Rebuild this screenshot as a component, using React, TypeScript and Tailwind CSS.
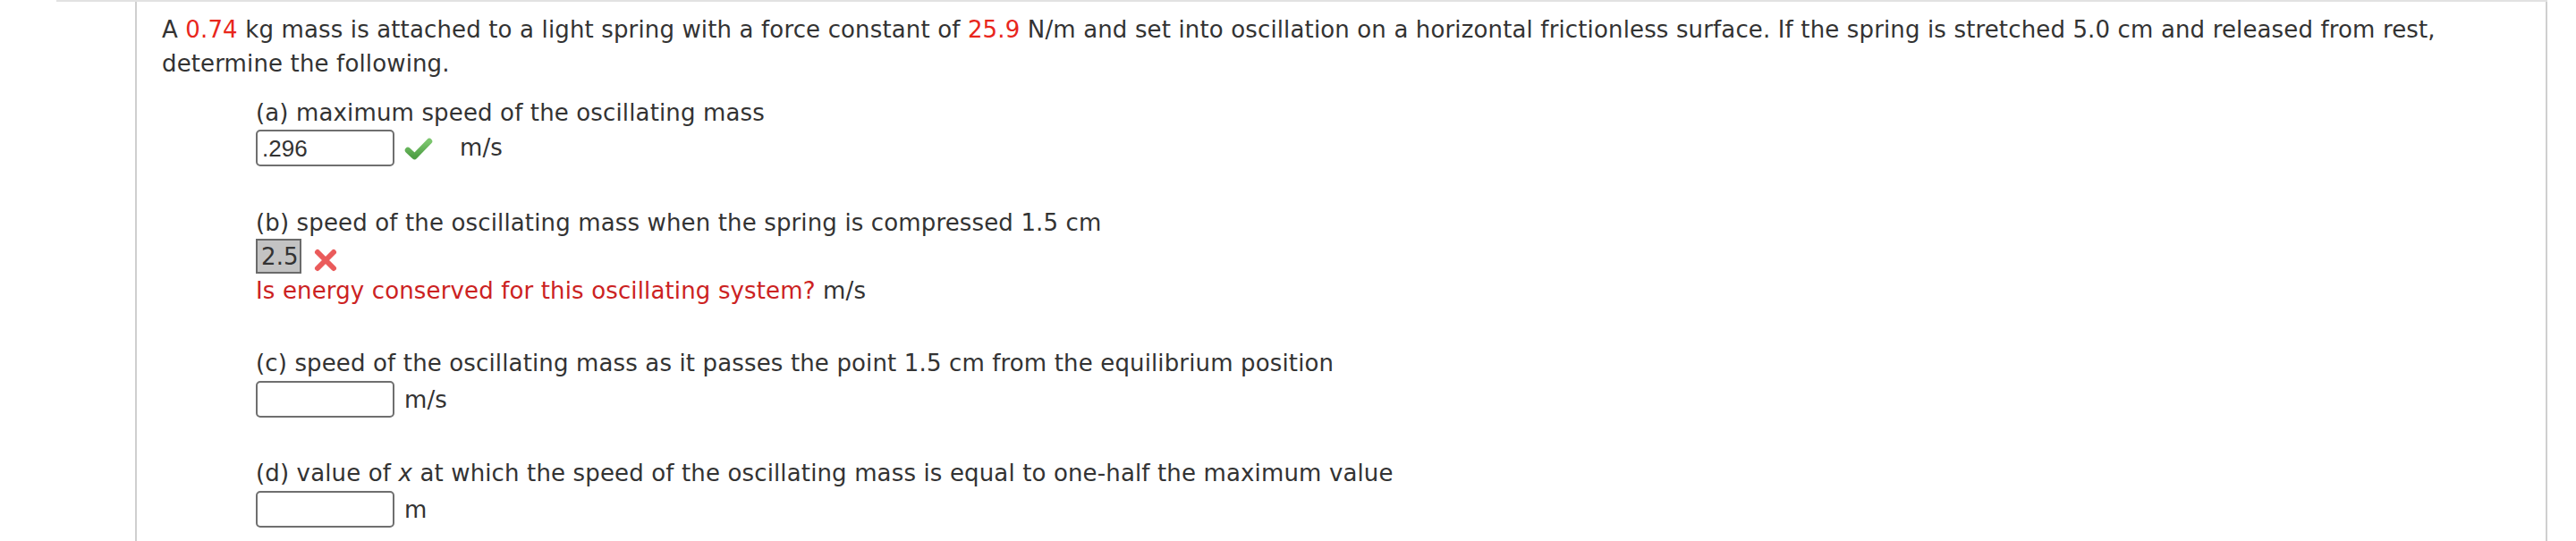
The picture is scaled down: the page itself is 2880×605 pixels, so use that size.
import React from 'react';

function CheckMark() {
  return (
    <svg width="32" height="27" viewBox="0 0 32 27" className="mt-[8px]">
      <defs>
        <linearGradient id="chk" x1="0" y1="0" x2="0" y2="1">
          <stop offset="0" stopColor="#7cc66e" />
          <stop offset="1" stopColor="#4f9f45" />
        </linearGradient>
      </defs>
      <path d="M4 15 L11.5 22 L28 5" fill="none" stroke="url(#chk)" strokeWidth="6.5" strokeLinecap="round" strokeLinejoin="round" />
    </svg>
  );
}

function CrossMark() {
  return (
    <svg width="28" height="28" viewBox="0 0 28 28" className="mt-[10px]">
      <path d="M5 5 L23 23 M23 5 L5 23" fill="none" stroke="#ea5b5b" strokeWidth="6" strokeLinecap="round" />
    </svg>
  );
}

function AnswerBox({ value }: { value?: string }) {
  return (
    <div className="h-[41px] w-[155px] rounded-[5px] border-2 border-[#6f6f6f] bg-white px-[5px] flex items-center text-[26px] tracking-normal text-[#333] font-['Liberation_Sans',Arial,sans-serif]">
      {value}
    </div>
  );
}

export default function App() {
  const red = 'text-[#e8261c]';

  return (
    <div className="w-[2880px] h-[605px] bg-white overflow-hidden font-['DejaVu_Sans',Verdana,sans-serif] text-[26px] leading-[38px] tracking-[0.14px] text-[#333]">
      <div className="ml-[63px] w-[2785px] h-full border-t-2 border-[#e2e2e2] flex">
        <div className="w-[88px] shrink-0" />
        <div className="flex-1 border-l-2 border-r-2 border-[#cfcfcf] pl-[28px] pt-[12px]">
          <p>
            A <span className={red}>0.74</span> kg mass is attached to a light spring with a force constant of{' '}
            <span className={red}>25.9</span> N/m and set into oscillation on a horizontal frictionless surface. If the
            spring is stretched 5.0 cm and released from rest,
            <br />
            determine the following.
          </p>

          <div className="ml-[105px]">
            {/* (a) */}
            <div className="mt-[17px]">
              <p>(a) maximum speed of the oscillating mass</p>
              <div className="flex items-start">
                <AnswerBox value=".296" />
                <div className="ml-[11px]">
                  <CheckMark />
                </div>
                <span className="ml-[30px] mt-[1px]">m/s</span>
              </div>
            </div>

            {/* (b) */}
            <div className="mt-[44px]">
              <p>(b) speed of the oscillating mass when the spring is compressed 1.5 cm</p>
              <div className="flex items-start -mt-[1px]">
                <div className="h-[39px] w-[51px] border-2 border-[#6a6a6a] bg-[#c3c3c3] pl-[4px] flex items-center">
                  2.5
                </div>
                <div className="ml-[13px]">
                  <CrossMark />
                </div>
              </div>
              <p className="text-[#cc2222]">
                Is energy conserved for this oscillating system? <span className="text-[#333]">m/s</span>
              </p>
            </div>

            {/* (c) */}
            <div className="mt-[43px]">
              <p>(c) speed of the oscillating mass as it passes the point 1.5 cm from the equilibrium position</p>
              <div className="flex items-center mt-[1px]">
                <AnswerBox />
                <span className="ml-[11px]">m/s</span>
              </div>
            </div>

            {/* (d) */}
            <div className="mt-[43px]">
              <p>
                (d) value of <span className="italic">x</span> at which the speed of the oscillating mass is equal to
                one-half the maximum value
              </p>
              <div className="flex items-center mt-[1px]">
                <AnswerBox />
                <span className="ml-[11px]">m</span>
              </div>
            </div>
          </div>
        </div>
      </div>
    </div>
  );
}
